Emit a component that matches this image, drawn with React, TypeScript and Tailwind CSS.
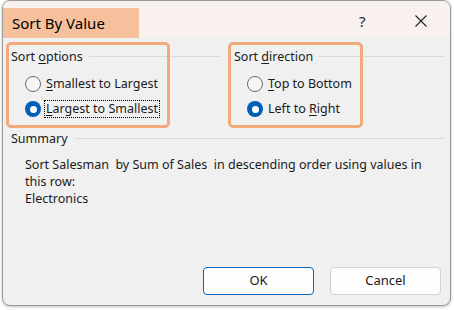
import React from 'react'

function Radio({ checked }: { checked?: boolean }) {
  return checked ? (
    <span className="w-[16px] h-[16px] rounded-full bg-[#005fb8] flex items-center justify-center shrink-0">
      <span className="w-[7px] h-[7px] rounded-full bg-white" />
    </span>
  ) : (
    <span className="w-[16px] h-[16px] rounded-full border border-[#6b6b6b] bg-[#f5f5f5] shrink-0" />
  )
}

function GroupHeader({ children }: { children: React.ReactNode }) {
  return (
    <div className="flex items-center h-[16px]">
      <span className="leading-none">{children}</span>
      <span className="flex-1 ml-[6px] h-px bg-[#dadada] translate-y-[-1px]" />
    </div>
  )
}

export default function App() {
  return (
    <div className="w-[454px] h-[310px] bg-white relative" style={{ fontFamily: '"Noto Sans", "Open Sans", sans-serif' }}>
      <div className="ml-[2px] w-[449px] h-[306px] border border-[#9a9a9a] rounded-lg overflow-hidden flex flex-col bg-[#f0f0f0] text-[12.5px] text-[#1a1a1a] shadow-[0_1px_3px_rgba(0,0,0,0.25)]">
        {/* Title bar */}
        <div className="h-[37px] bg-[#f9f1ee] flex items-end shrink-0 relative">
          <div className="w-[136px] h-[30px] bg-[#f6c09c] flex items-center pl-[9px] text-[15px] text-black">
            Sort By Value
          </div>
          <div className="absolute top-[9px] left-[356px] text-[15px] text-[#222]">?</div>
          <svg className="absolute top-[14px] left-[412px] w-[12px] h-[12px]" viewBox="0 0 12 12" fill="none" stroke="#222" strokeWidth={1.1}>
            <path d="M0.5 0.5 11.5 11.5M11.5 0.5 0.5 11.5" />
          </svg>
        </div>

        {/* Body */}
        <div className="flex-1 flex flex-col pt-[11px] relative">
          <div className="flex pl-[8px] pr-[6px]">
            <div className="w-[209px]">
              <GroupHeader>
                Sort <u className="underline-offset-2">o</u>ptions
              </GroupHeader>
              <div className="flex flex-col gap-[7px] pl-[14px] pt-[10px]">
                <div className="flex items-center gap-[5px] h-[18px]">
                  <Radio />
                  <span><u className="underline-offset-2">S</u>mallest to Largest</span>
                </div>
                <div className="flex items-center gap-[3px] h-[18px]">
                  <Radio checked />
                  <span className="border border-dotted border-black px-[1px] leading-[16px]">
                    <u className="underline-offset-2">L</u>argest to Smallest
                  </span>
                </div>
              </div>
            </div>
            <div className="w-[14px]" />
            <div className="flex-1">
              <GroupHeader>
                Sort <u className="underline-offset-2">d</u>irection
              </GroupHeader>
              <div className="flex flex-col gap-[7px] pl-[13px] pt-[10px]">
                <div className="flex items-center gap-[5px] h-[18px]">
                  <Radio />
                  <span><u className="underline-offset-2">T</u>op to Bottom</span>
                </div>
                <div className="flex items-center gap-[5px] h-[18px]">
                  <Radio checked />
                  <span>Left to <u className="underline-offset-2">R</u>ight</span>
                </div>
              </div>
            </div>
          </div>

          <div className="pl-[8px] pr-[6px] mt-[13px]">
            <GroupHeader>Summary</GroupHeader>
            <div className="pl-[14px] pt-[9px] leading-[17px]">
              <div>Sort Salesman&nbsp; by Sum of Sales&nbsp; in descending order using values in</div>
              <div>this row:</div>
              <div>Electronics</div>
            </div>
          </div>

          <div className="flex-1" />
          <div className="flex justify-end gap-[16px] pr-[9px] pb-[10px]">
            <button className="w-[111px] h-[28px] rounded-[4px] border border-[#0067c0] bg-[#fdfdfd] text-[13px]">OK</button>
            <button className="w-[111px] h-[28px] rounded-[4px] border border-[#d3d3d3] bg-[#fdfdfd] text-[13px]">Cancel</button>
          </div>
        </div>
      </div>

      {/* Annotation boxes */}
      <div className="absolute left-[6px] top-[42px] w-[164px] h-[86px] border-[3px] border-[#f2aa7c] rounded-[5px]" />
      <div className="absolute left-[228px] top-[42px] w-[135px] h-[86px] border-[3px] border-[#f2aa7c] rounded-[5px]" />
    </div>
  )
}
